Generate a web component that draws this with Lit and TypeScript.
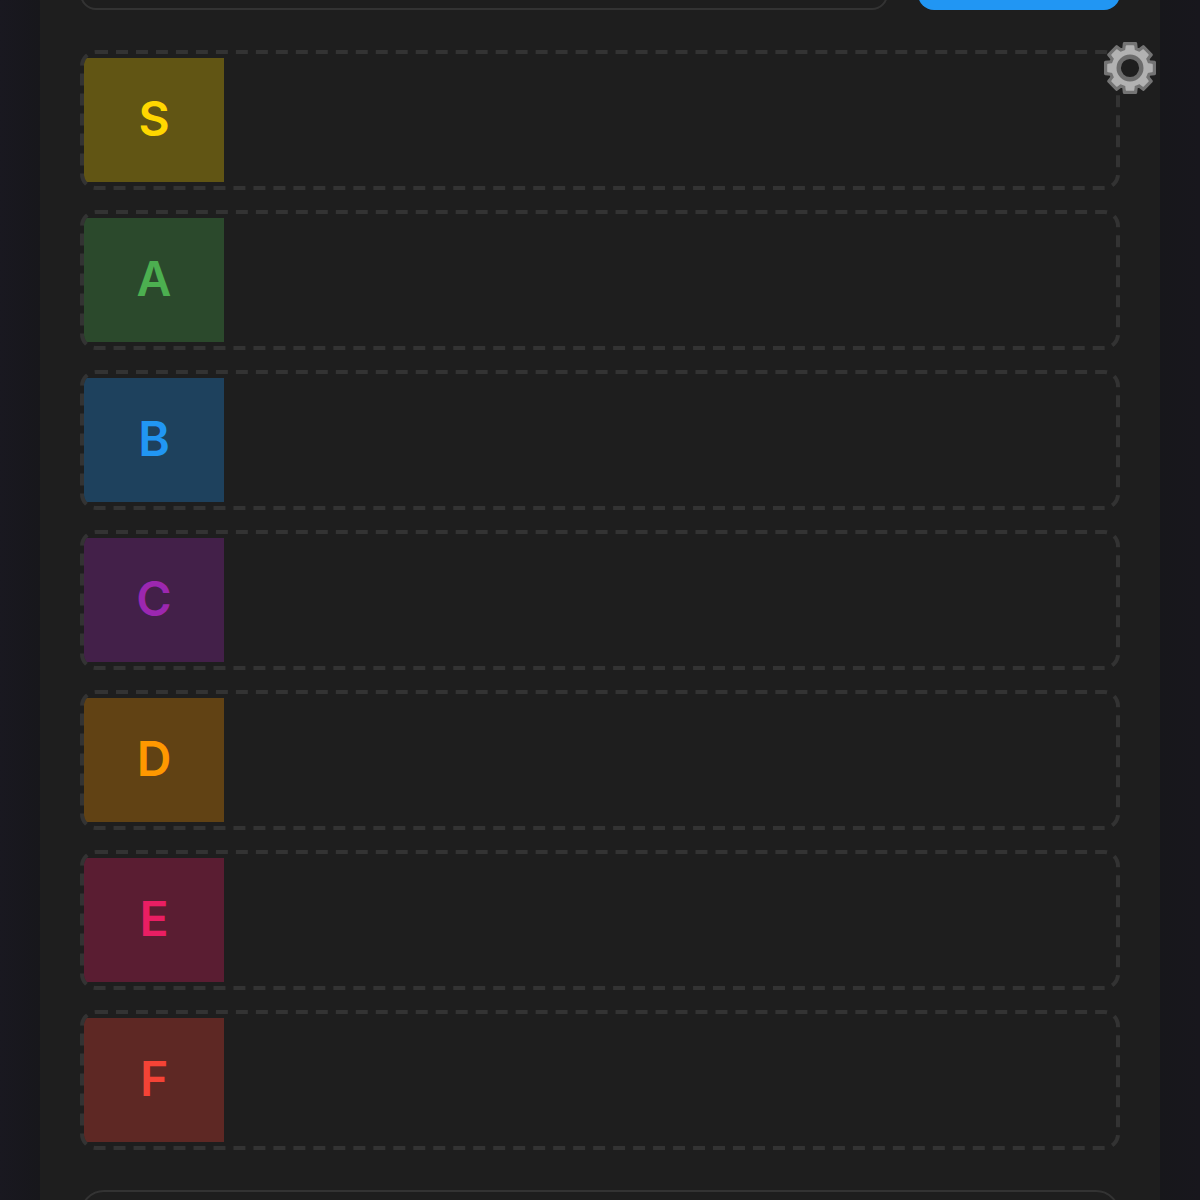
import { LitElement, html, css } from "lit";
import { customElement } from "lit/decorators.js";

const TIERS = ["S", "A", "B", "C", "D", "E", "F"];

@customElement("gear-icon")
class GearIcon extends LitElement {
  static styles = css`
    :host { display: block; width: 56px; height: 56px; }
    svg { display: block; filter: blur(0.5px); }
    .edge { fill: #747474; stroke: #747474; stroke-width: 3; stroke-linejoin: round; }
    .body { fill: #b2b2b2; stroke: #b2b2b2; stroke-width: 2; stroke-linejoin: round; }
    .ring { fill: #1e1e1e; stroke: #6c6c6c; stroke-width: 4.4; }
  `;
  private teeth(hw: number, top: number, base: number) {
    return [0, 45, 90, 135, 180, 225, 270, 315].map((a) => {
      const r = (a * Math.PI) / 180;
      const pts = [[-hw - 0.6, -base], [-hw, -top], [hw, -top], [hw + 0.6, -base]];
      return pts
        .map(([x, y]) => `${(x * Math.cos(r) - y * Math.sin(r)).toFixed(2)} ${(x * Math.sin(r) + y * Math.cos(r)).toFixed(2)}`)
        .join("L");
    }).join("L");
  }
  render() {
    return html`<svg width="56" height="56" viewBox="-28 -28 56 56" aria-hidden="true">
      <path class="edge" d="M${this.teeth(5.7, 24.5, 19.2)}Z"></path>
      <path class="body" d="M${this.teeth(3.3, 21.8, 17.3)}Z"></path>
      <circle class="ring" r="11.3"></circle>
    </svg>`;
  }
}

@customElement("app-root")
class AppRoot extends LitElement {
  static styles = css`
    :host {
      display: block; position: relative; width: 1200px; height: 1200px; overflow: hidden;
      background: #18171d; font-family: Inter, "Liberation Sans", sans-serif;
    }
    * { box-sizing: border-box; }
    .page {
      height: 1200px; padding: 0 40px;
      background: linear-gradient(90deg, #191820 0, #17171b 40px, #17171b 1160px, #18171d 1200px);
    }
    .panel { height: 1200px; padding: 0 40px; background: #1e1e1e; overflow: hidden; }
    .bar { display: flex; gap: 30px; height: 10px; align-items: flex-end; }
    .field { flex: 1; height: 80px; border: 2px solid #333; border-radius: 16px; }
    .button { width: 202px; height: 80px; border-radius: 16px; background: #2196f3; }
    .tiers { display: flex; flex-direction: column; gap: 20px; margin: 40px 0; }
    .tier { position: relative; height: 140px; padding: 8px 4px; }
    .tier::before {
      content: ""; box-sizing: border-box; position: absolute; left: 0; top: 0; width: 520px; height: 70px;
      border: 2px dashed #333; border-radius: 8px; transform: scale(2); transform-origin: 0 0;
    }
    .clip { position: relative; height: 132px; margin: -4px 0; padding: 4px 0; border-radius: 12px; overflow: hidden; }
    .label {
      display: flex; align-items: center; justify-content: center;
      width: 140px; height: 124px; padding-bottom: 2px; font-size: 48px; font-weight: 600; line-height: 1;
    }
    .s { color: #ffd700; background: rgba(255, 215, 0, 0.3); }
    .a { color: #4caf50; background: rgba(76, 175, 80, 0.3); }
    .b { color: #2196f3; background: rgba(33, 150, 243, 0.3); }
    .c { color: #9c27b0; background: rgba(156, 39, 176, 0.3); }
    .d { color: #ff9800; background: rgba(255, 152, 0, 0.3); }
    .e { color: #e91e63; background: rgba(233, 30, 99, 0.3); }
    .f { color: #f44336; background: rgba(244, 67, 54, 0.3); }
    .pool { height: 200px; border: 2px solid #333; border-radius: 24px; }
    .settings { position: absolute; left: 1102px; top: 40px; }
  `;
  render() {
    return html`
      <div class="page">
        <div class="panel">
          <div class="bar"><div class="field"></div><div class="button"></div></div>
          <div class="tiers">
            ${TIERS.map((t) => html`<div class="tier"><div class="clip"><div class="label ${t.toLowerCase()}">${t}</div></div></div>`)}
          </div>
          <div class="pool"></div>
        </div>
      </div>
      <gear-icon class="settings"></gear-icon>
    `;
  }
}
